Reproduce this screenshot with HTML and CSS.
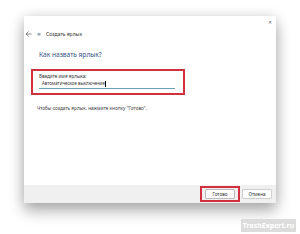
FILE: index.html
```html
<!DOCTYPE html>
<html lang="ru">
<head>
<meta charset="utf-8">
<link rel="stylesheet" href="styles.css">
</head>
<body>
<div class="window">
  <div class="titlebar"><span class="close">✕</span></div>
  <div class="nav">
    <svg class="back" width="7" height="6" viewBox="0 0 7 6"><path d="M6.5 3H1M3.5 0.5L1 3l2.5 2.5" fill="none" stroke="#555" stroke-width="0.7"/></svg>
    <svg class="appicon" width="4" height="4" viewBox="0 0 4 4"><rect x="0.5" y="1" width="3" height="2.5" fill="#9aa8b8"/></svg>
    <span class="navtitle">Создать ярлык</span>
  </div>
  <div class="content">
    <div class="heading">Как назвать ярлык?</div>
    <div class="redbox">
      <div class="label">Введите имя ярлыка:</div>
      <div class="input"><span>Автоматическое выключение</span><span class="caret"></span></div>
    </div>
    <div class="hint">Чтобы создать ярлык, нажмите кнопку "Готово".</div>
  </div>
  <div class="footer">
    <div class="redbtn"><div class="btn primary">Готово</div></div>
    <div class="btn">Отмена</div>
  </div>
</div>
<div class="watermark">TrashExpert.ru</div>
</body>
</html>
```
FILE: styles.css
```css
html, body {
  margin: 0;
  padding: 0;
  background: #ffffff;
  width: 300px;
  height: 234px;
  overflow: hidden;
  font-family: "Noto Sans", "Open Sans", sans-serif;
}
body {
  padding-top: 16px;
  box-sizing: border-box;
}
.window {
  margin-left: 24px;
  width: 252px;
  height: 187px;
  background: #ffffff;
  box-shadow: 0 8px 14px rgba(0, 0, 0, 0.3), 0 0 12px rgba(0, 0, 0, 0.12);
  display: flex;
  flex-direction: column;
}
.titlebar {
  height: 12px;
  display: flex;
  justify-content: flex-end;
  align-items: center;
  padding-right: 4px;
}
.close {
  font-size: 5px;
  color: #666;
  line-height: 1;
  margin-top: 1px;
}
.nav {
  height: 12px;
  display: flex;
  align-items: center;
  padding-left: 1px;
}
.back {
  display: block;
}
.appicon {
  display: block;
  margin-left: 5px;
}
.navtitle {
  margin-left: 5px;
  font-size: 5px;
  color: #333;
  line-height: 1;
}
.content {
  padding-left: 7px;
}
.heading {
  margin-top: 10px;
  margin-left: 8px;
  font-size: 6.6px;
  color: #34507e;
  line-height: 10px;
}
.redbox {
  margin-top: 9px;
  width: 144px;
  height: 20px;
  border: 2px solid #d3303e;
  padding: 2px 0 0 6px;
}
.label {
  font-size: 4.6px;
  color: #333;
  line-height: 6px;
}
.input {
  margin-top: 1px;
  width: 133px;
  height: 8px;
  border-bottom: 1px solid #6aa0b8;
  padding-left: 3px;
  font-size: 4.4px;
  color: #333;
  line-height: 7px;
  display: flex;
  align-items: flex-start;
}
.caret {
  width: 0.6px;
  height: 6px;
  margin-top: 0.5px;
  background: #000;
}
.hint {
  margin-top: 10px;
  margin-left: 6px;
  font-size: 4.7px;
  color: #444;
  line-height: 6px;
}
.footer {
  margin-top: auto;
  height: 18px;
  background: #f0f0f0;
  display: flex;
  justify-content: flex-end;
  align-items: center;
  padding-right: 4px;
  gap: 2px;
}
.redbtn {
  border: 2px solid #d3303e;
  padding: 1px 3px;
  display: flex;
}
.btn {
  width: 30px;
  height: 10px;
  background: #fdfdfd;
  border: 1px solid #cfcfcf;
  box-sizing: border-box;
  font-size: 4.6px;
  color: #333;
  display: flex;
  align-items: center;
  justify-content: center;
  border-radius: 1px;
}
.btn.primary {
  border-color: #bbb;
}
.watermark {
  margin-top: 16px;
  margin-left: 241px;
  width: 55px;
  height: 13px;
  background: #dcdcdc;
  color: #ffffff;
  font-size: 7px;
  font-weight: bold;
  display: flex;
  align-items: center;
  justify-content: center;
}
```
